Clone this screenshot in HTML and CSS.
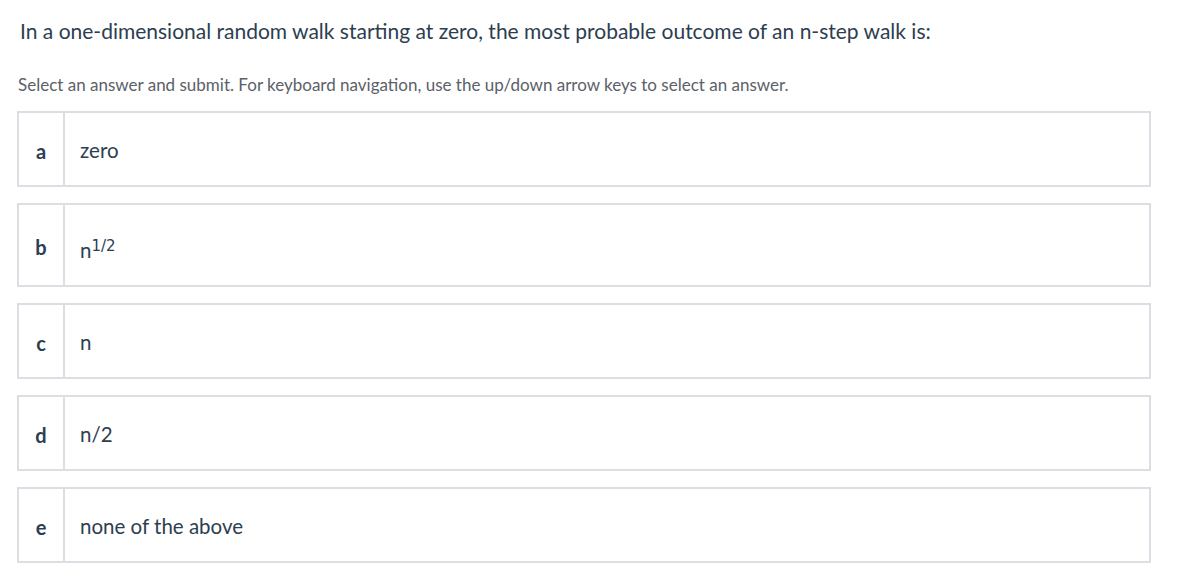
FILE: index.html
```html
<!DOCTYPE html>
<html lang="en">
<head>
<meta charset="utf-8">
<title>Question</title>
<link rel="stylesheet" href="styles.css">
</head>
<body>
<div class="page">
  <h1 class="question">In a one-dimensional random walk starting at zero, the most probable outcome of an n-step walk is:</h1>
  <p class="hint">Select an answer and submit. For keyboard navigation, use the up/down arrow keys to select an answer.</p>
  <ul class="answers">
    <li class="answer"><span class="letter">a</span><span class="text">zero</span></li>
    <li class="answer"><span class="letter">b</span><span class="text">n<sup class="sup">1/2</sup></span></li>
    <li class="answer"><span class="letter">c</span><span class="text">n</span></li>
    <li class="answer"><span class="letter">d</span><span class="text">n/2</span></li>
    <li class="answer"><span class="letter">e</span><span class="text">none of the above</span></li>
  </ul>
</div>
</body>
</html>
```

FILE: styles.css
```css
html, body {
  margin: 0;
  padding: 0;
  background: #ffffff;
}

.page {
  padding: 16px 27px 0 17px;
  font-family: Lato, "Liberation Sans", sans-serif;
}

.question {
  margin: 0 0 0 3px;
  font-size: 21px;
  font-weight: 400;
  line-height: 30px;
  color: #2c3e50;
}

.hint {
  margin: 28px 0 0 1px;
  font-size: 17px;
  line-height: 22px;
  color: #5b6168;
}

.answers {
  list-style: none;
  margin: 15px 0 0 0;
  padding: 0;
  display: flex;
  flex-direction: column;
  gap: 16px;
}

.answer {
  display: flex;
  border: 2px solid #dbdee2;
  align-items: stretch;
}

.letter {
  width: 44px;
  flex: none;
  display: flex;
  align-items: center;
  justify-content: center;
  border-right: 2px solid #dbdee2;
  padding-top: 3px;
  font-size: 20px;
  font-weight: 700;
  color: #2c3e50;
}

.text {
  display: block;
  padding: 25px 0 22px 15px;
  font-size: 20.5px;
  line-height: 25px;
  color: #2c3e50;
}

.sup {
  font-family: "DejaVu Sans", sans-serif;
  font-size: 15px;
  vertical-align: 7px;
  line-height: 32px;
}
```
